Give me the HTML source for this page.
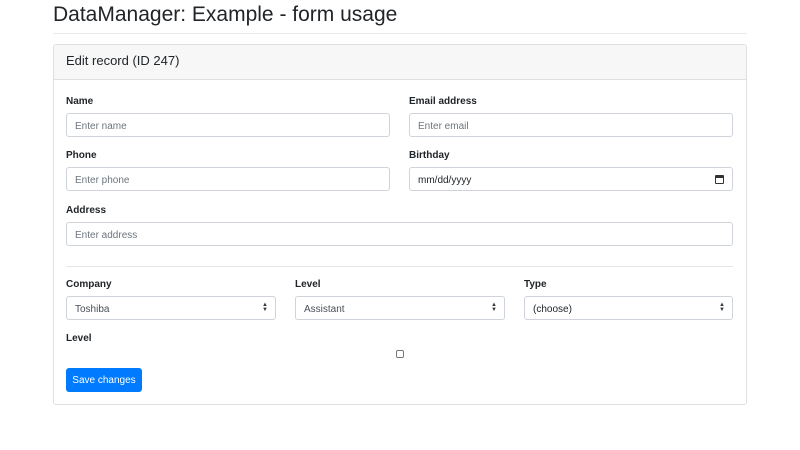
<!DOCTYPE html>
<html><head><style>
*{box-sizing:border-box;margin:0;padding:0}
body{width:800px;height:450px;background:#fff;font-family:"Liberation Sans",sans-serif;color:#212529;position:relative;overflow:hidden}
.a{position:absolute}
.lbl{position:absolute;font-size:10px;font-weight:bold;color:#212529}
.inp{position:absolute;height:24px;border:1px solid #ced4da;border-radius:3px;font-size:10px;color:#6c757d;padding:7px 8px 5px;background:#fff}
.sel{color:#495057}
.arr{position:absolute;right:7px;top:6px;font-size:6px;line-height:5px;color:#343a40}
</style></head><body>
<div class="a" style="left:53px;top:3px;font-size:21px;color:#212529">DataManager: Example - form usage</div>
<div class="a" style="left:53px;top:33px;width:694px;height:1px;background:#e9ecef"></div>
<div class="a" style="left:53px;top:44px;width:694px;height:361px;border:1px solid #dfdfdf;border-radius:3px"></div>
<div class="a" style="left:54px;top:45px;width:692px;height:35px;background:#f7f7f7;border-bottom:1px solid #dfdfdf"></div>
<div class="a" style="left:66px;top:53px;font-size:13px;color:#212529">Edit record (ID 247)</div>

<div class="lbl" style="left:66px;top:96px">Name</div>
<div class="lbl" style="left:409px;top:96px">Email address</div>
<div class="inp" style="left:66px;top:113px;width:324px">Enter name</div>
<div class="inp" style="left:409px;top:113px;width:324px">Enter email</div>

<div class="lbl" style="left:66px;top:150px">Phone</div>
<div class="lbl" style="left:409px;top:150px">Birthday</div>
<div class="inp" style="left:66px;top:167px;width:324px">Enter phone</div>
<div class="inp sel" style="left:409px;top:167px;width:324px;color:#212529">mm/dd/yyyy
<div class="a" style="right:8px;top:7px;width:9px;height:9px;border:1.5px solid #333;border-top-width:3px;border-radius:1px"></div></div>

<div class="lbl" style="left:66px;top:205px">Address</div>
<div class="inp" style="left:66px;top:222px;width:667px">Enter address</div>

<div class="a" style="left:66px;top:266px;width:667px;height:1px;background:#e6e6e6"></div>

<div class="lbl" style="left:66px;top:279px">Company</div>
<div class="lbl" style="left:295px;top:279px">Level</div>
<div class="lbl" style="left:524px;top:279px">Type</div>
<div class="inp sel" style="left:66px;top:296px;width:210px">Toshiba<div class="arr">▲<br>▼</div></div>
<div class="inp sel" style="left:295px;top:296px;width:210px">Assistant<div class="arr">▲<br>▼</div></div>
<div class="inp sel" style="left:524px;top:296px;width:209px;color:#212529">(choose)<div class="arr">▲<br>▼</div></div>

<div class="lbl" style="left:66px;top:333px">Level</div>
<div class="a" style="left:396px;top:350px;width:8px;height:8px;border:1px solid #777;border-radius:2px"></div>

<div class="a" style="left:66px;top:368px;width:76px;height:24px;background:#007bff;border-radius:3px;color:#fff;font-size:10px;text-align:center;line-height:26px">Save changes</div>
</body></html>
